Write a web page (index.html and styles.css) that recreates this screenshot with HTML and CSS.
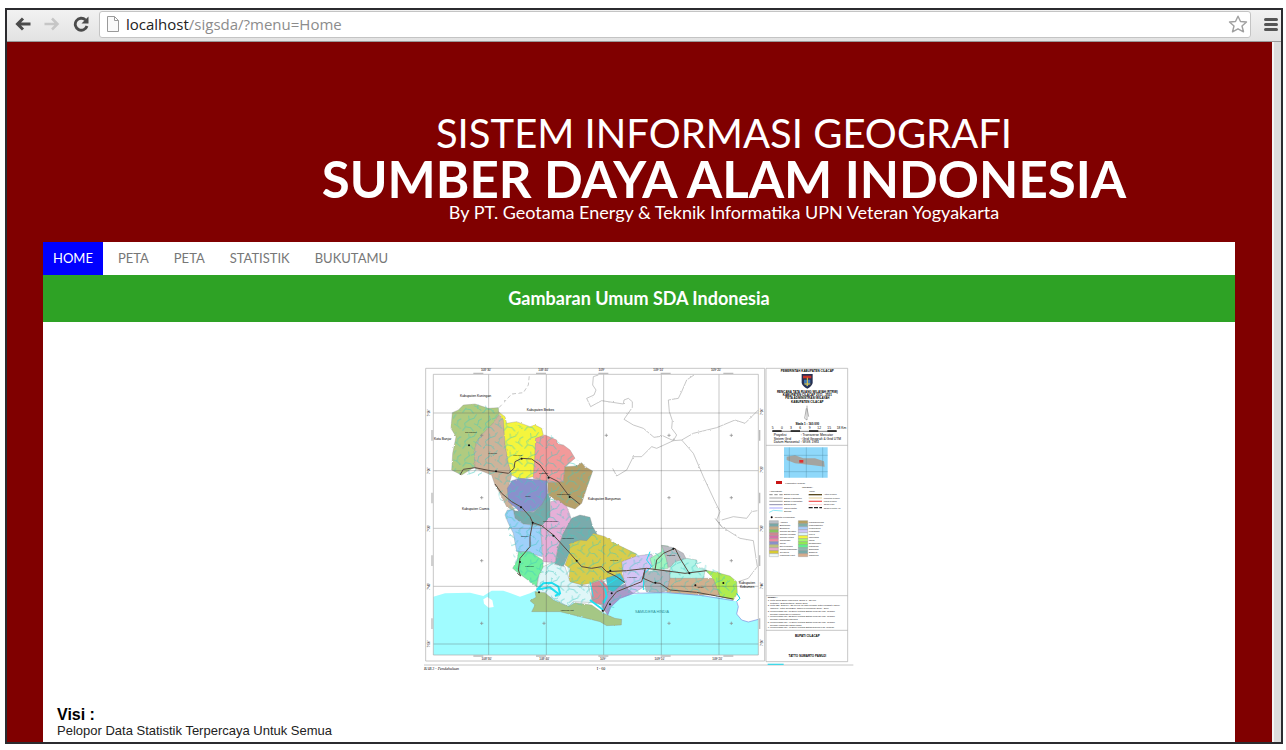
FILE: index.html
```html
<!DOCTYPE html>
<html lang="id">
<head>
    <meta charset="UTF-8">
    <meta name="viewport" content="width=device-width, initial-scale=1.0">
    <title>Sistem Informasi Geografi</title>
    <link rel="stylesheet" href="styles.css">
</head>
<body>
    <div class="browser">
        <div class="toolbar">
            <button class="tool" type="button" aria-label="Back">
                <svg width="16" height="14" viewBox="0 0 16 14"><path d="M8 1.500 2.500 7 8 12.500M3 7h12.500" fill="none" stroke="#4b4b4b" stroke-width="3"/></svg>
            </button>
            <button class="tool" type="button" aria-label="Forward">
                <svg width="16" height="14" viewBox="0 0 16 14"><path d="M8 1.500 13.500 7 8 12.500M13 7H.5" fill="none" stroke="#c6c6c6" stroke-width="2.500"/></svg>
            </button>
            <button class="tool" type="button" aria-label="Reload">
                <svg width="16" height="16" viewBox="0 0 16 16"><path d="M12.500 4A6 6 0 1 0 14 10" fill="none" stroke="#4b4b4b" stroke-width="2.800"/><path d="M15.500.5v7h-7z" fill="#4b4b4b"/></svg>
            </button>
            <div class="address">
                <svg width="12" height="16" viewBox="0 0 12 16"><path d="M.5.5h7l4 4v11H.5zM7.500.5v4h4" fill="#fafafa" stroke="#9a9a9a"/></svg>
                <label class="host" for="url">localhost</label>
                <input class="url" id="url" type="text" value="/sigsda/?menu=Home">
                <button class="star" type="button" aria-label="Bookmark">
                    <svg width="20" height="18" viewBox="0 0 20 18"><path d="M10 1.200 12.500 6.500 18.500 7 14 11l1.500 5.800L10 13.800 4.500 16.800 6 11 1.500 7l6-.5z" fill="#fff" stroke="#a0a0a0" stroke-width="1.400" stroke-linejoin="round"/></svg>
                </button>
            </div>
            <button class="tool" type="button" aria-label="Menu">
                <svg width="14" height="13" viewBox="0 0 14 13"><path d="M1.500 1.500h11M1.500 6.500h11M1.500 11.500h11" stroke="#555" stroke-width="3" stroke-linecap="round"/></svg>
            </button>
        </div>

        <div class="viewport">
            <div class="page">
                <header class="banner">
                    <h1>SISTEM INFORMASI GEOGRAFI <strong>SUMBER DAYA ALAM INDONESIA</strong></h1>
                    <p>By PT. Geotama Energy &amp; Teknik Informatika UPN Veteran Yogyakarta</p>
                </header>

                <div class="container">
                    <nav class="menu">
                        <a class="active" href="#">HOME</a>
                        <a href="#">PETA</a>
                        <a href="#">PETA</a>
                        <a href="#">STATISTIK</a>
                        <a href="#">BUKUTAMU</a>
                    </nav>
                    <h2 class="heading">Gambaran Umum SDA Indonesia</h2>

                    <main class="content">
                        <svg class="map" viewBox="0 0 1314 945" role="img" aria-label="Peta Kabupaten Cilacap">
                            <defs>
                                <pattern id="rivers" width="62" height="54" patternUnits="userSpaceOnUse">
                                    <path d="M4 50 13 38 10 28 24 17 22 5M24 17l14-4 8-12M13 38l15 3 9 11M60 44 49 34l3-14 10-6M49 34l-11-5"/>
                                </pattern>
                                <filter id="rough" x="-5%" y="-5%" width="110%" height="110%">
                                    <feTurbulence type="fractalNoise" baseFrequency="0.12" numOctaves="2" seed="4"/>
                                    <feDisplacementMap in="SourceGraphic" scale="6" xChannelSelector="R" yChannelSelector="G"/>
                                </filter>
                            </defs>

                            <!-- laut -->
                            <path class="sea" d="M40 710 75 700 150 698 190 708 215 692 250 692 300 710 330 700 350 690 560 760 570 745 590 722 620 706 700 697 800 700 900 713 948 724 955 740 950 762 965 780 985 786 1015 778V885H40z"/>
                            <path d="M190 718l12-7 15 10 4 20-15 2-14-12z" fill="#fff"/>

                            <!-- kecamatan -->
                            <g filter="url(#rough)">
                                <g class="regions">
                                    <path fill="#b0cb80" d="M97 158 115 150 130 135 165 132 205 145 235 143 237 165 215 195 185 225 170 245 163 275 165 320 125 345 95 330 98 280 108 230 93 205z"/>
                                    <path fill="#cdb39a" d="M237 165 250 175 255 250 265 310 275 345 265 380 270 420 285 455 260 440 240 400 225 375 215 345 165 325 163 275 170 245 185 225 215 195z"/>
                                    <path fill="#f5f53c" d="M235 155 255 170 260 190 290 185 330 200 345 195 365 205 370 225 347 240 345 290 340 350 300 358 275 345 265 310 255 250 250 180z"/>
                                    <path fill="#f29a9a" d="M347 235 375 225 410 240 412 252 430 255 450 270 465 295 435 320 430 365 385 368 340 355 345 290z"/>
                                    <path fill="#b5a06a" d="M435 320 470 318 485 308 495 320 518 333 500 385 485 430 465 447 430 435 385 405 383 368 430 365z"/>
                                    <path fill="#8a90cc" d="M275 362 300 355 340 358 380 362 383 395 375 430 340 455 300 455 265 425 262 385z"/>
                                    <path fill="#78a9a8" d="M280 452 340 457 365 435 383 400 390 415 390 475 365 498 310 492 285 475z"/>
                                    <path fill="#9fd0fa" d="M262 450 280 450 285 475 310 492 362 498 367 590 330 580 290 575 280 520 265 490 255 465z"/>
                                    <path fill="#e6b0d8" d="M392 425 415 420 440 440 450 465 455 490 430 520 415 560 405 608 370 605 362 500 390 470z"/>
                                    <path fill="#7aabac" d="M455 475 480 465 510 472 518 500 530 520 525 540 480 548 447 580 430 620 405 612 415 560 430 520z"/>
                                    <path fill="#d8cc4c" d="M447 580 450 550 480 540 500 542 520 520 555 530 590 553 650 582 645 592 620 600 605 640 615 665 575 655 540 660 515 670 480 675 445 665 450 625 435 615z"/>
                                    <path fill="#6ff0a0" d="M295 575 330 575 368 600 370 625 355 650 350 680 310 650 290 635 278 625 292 600z"/>
                                    <path fill="#dff6f8" d="M370 620 390 610 435 620 450 665 505 680 520 728 460 725 445 740 400 715 360 700 350 685 357 645z"/>
                                    <path fill="#a5c785" d="M345 695 375 698 400 720 445 740 465 728 515 735 550 760 585 775 605 778 604 795 560 797 540 785 480 770 420 755 335 755 345 735 330 722 348 712z"/>
                                    <path fill="#d88a94" d="M515 670 545 660 565 680 570 720 545 735 515 725z"/>
                                    <path fill="#a99ac8" d="M565 695 620 670 650 680 640 700 600 715 572 740 563 765 545 740z"/>
                                    <path fill="#3fc0d0" d="M558 655 600 640 615 665 580 695 565 690z"/>
                                    <path fill="#d4c4f4" d="M605 605 650 588 695 582 700 610 680 640 672 680 640 700 620 685 610 650z"/>
                                    <path fill="#9ff5c0" d="M690 595 725 575 725 556 745 558 740 600 745 625 700 632z"/>
                                    <path fill="#bcbcc4" d="M725 556 760 563 790 580 800 600 785 615 745 622 740 600z"/>
                                    <path fill="#b0b8c0" d="M675 635 750 630 750 690 720 698 680 696 670 660z"/>
                                    <path fill="#b0f5e8" d="M750 622 765 605 800 595 830 600 830 620 855 630 850 660 750 655z"/>
                                    <path fill="#d0b08e" d="M750 655 880 655 900 705 840 705 740 697z"/>
                                    <path fill="#b0ec50" d="M855 630 900 640 930 648 950 665 952 700 940 720 900 710 880 655z"/>
                                </g>
                                <path fill="url(#rivers)" d="M97 158 165 132 235 143 260 190 365 205 410 240 465 295 518 333 485 430 430 435 455 475 510 472 525 520 650 582 695 582 760 563 830 600 950 665 940 720 740 697 620 700 563 765 515 730 445 740 350 685 290 635 255 465 215 345 125 345 95 330 108 230z"/>
                            </g>
                            <path class="water" d="M350 690 370 670 395 668 415 680 420 700 405 708M355 688 390 682 420 705M510 720 530 735 550 750M555 685 560 710 550 730"/>
                            <path class="water thin" d="M690 575 680 600 695 620 672 640 670 690M560 675 600 650M510 665 520 710M540 665 555 685"/>
                            <path d="M563 765 572 742 600 715 640 700 740 698 840 706 940 722M950 724 955 740 950 762 965 780 985 786 1015 778" fill="none" stroke="#7b8be0" stroke-width="2"/>

                            <!-- batas dan jalan -->
                            <g class="border" filter="url(#rough)">
                                <path stroke-dasharray="12 7" d="M237 143 275 102 310 98 325 75 328 45"/>
                                <path d="M535 45 520 50 518 75 528 90 522 105 500 115 512 140 530 130 545 122 610 132 612 120 625 115 637 125 637 142 612 178 640 195 670 205 702 232 730 228 760 242 785 240 820 220 890 203 945 180 975 190 1005 160 1015 150"/>
                                <path d="M822 45 800 60 785 95 775 115 745 120 748 155 757 182 755 205 770 225 760 242 710 265 695 260 665 290 640 290 620 330 590 348 578 325"/>
                                <path d="M785 240 820 280 850 350 885 425 900 455 890 480 905 500 960 535 1000 542 1012 620 985 655 955 665M905 500 885 475M905 480 940 470 980 475 995 455 1012 452"/>
                            </g>
                            <path d="M950 700 960 715 950 724" fill="none" stroke="#00d0e0" stroke-width="3"/>
                            <g class="road">
                                <path d="M120 345 130 328 165 323 210 332 265 340 282 325 285 305 305 295 335 297 360 315 385 350 415 365 445 405 480 433"/>
                                <path d="M225 372 245 400 275 425 305 442 330 470 338 488 365 497 400 525 450 580 485 620 515 625 545 620 560 635 620 632 680 625 795 640 860 632"/>
                                <path d="M338 488 330 530 330 560 300 595 295 630 302 648 292 640M705 630 710 600 730 580 765 565 780 595 808 640M675 628 665 665 640 675 590 695 565 725 550 755M675 628 670 655 700 668 720 670 750 690 830 697 940 717M560 635 590 650 615 668"/>
                            </g>
                            <path class="towns" d="M147 256h.1M228 334h.1M305 296h.1M386 353h.1M449 411h.1M303 442h.1M338 488h.1M400 527h.1M300 606h.1M357 697h.1M470 602h.1M571 632h.1M575 700h.1M570 733h.1M548 752h.1M760 566h.1M706 668h.1M808 640h.1M826 676h.1M910 669h.1"/>

                            <!-- grid koordinat -->
                            <path class="grid" d="M206 43V885M379 43V885M551 43V885M724 43V885M897 43V885M40 159H1015M40 332H1015M40 505H1015M40 679H1015M40 852H1015"/>
                            <path class="frame" d="M17 25H1034V903H17zM40 43H1015V885H40zM1038 25H1283V905H1038zM1038 256H1283M1038 707H1283M1038 811H1283"/>
                            <path class="frame" d="M12 915H1300"/>
                            <path class="cross" d="M180 413h10m-5-5v10M180 602h10m-5-5v10M180 790h10m-5-5v10M367 790h10m-5-5v10M554 226h10m-5-5v10M742 226h10m-5-5v10M929 226h10m-5-5v10M742 413h10m-5-5v10M929 413h10m-5-5v10M929 602h10m-5-5v10M742 790h10m-5-5v10M929 790h10m-5-5v10M180 226h10m-5-5v10"/>
                            <path class="ticks" d="M160 40h30M348 40h30M535 40h30M722 40h30M910 40h30M160 888h30M348 888h30M535 888h30M722 888h30M910 888h30M36 210v32M36 398v32M36 586v32M36 775v32M1019 210v32M1019 398v32M1019 586v32M1019 775v32"/>

                            <g class="coord">
                                <text x="198" y="34">108°30'</text><text x="370" y="34">108°40'</text><text x="545" y="34">109°</text><text x="715" y="34">109°10'</text><text x="888" y="34">109°20'</text>
                                <text x="200" y="900">108°30'</text><text x="373" y="900">108°40'</text><text x="549" y="900">109°</text><text x="719" y="900">109°10'</text><text x="892" y="900">109°20'</text>
                                <text transform="translate(31 159) rotate(-90)">7°10'</text><text transform="translate(31 332) rotate(-90)">7°20'</text><text transform="translate(31 505) rotate(-90)">7°30'</text><text transform="translate(31 679) rotate(-90)">7°40'</text><text transform="translate(31 852) rotate(-90)">7°50'</text>
                                <text transform="translate(1030 155) rotate(-90)">7°10'</text><text transform="translate(1030 328) rotate(-90)">7°20'</text><text transform="translate(1030 505) rotate(-90)">7°30'</text><text transform="translate(1030 677) rotate(-90)">7°40'</text><text transform="translate(1030 848) rotate(-90)">7°50'</text>
                            </g>
                            <g class="place">
                                <text x="120" y="111">Kabupaten Kuningan</text>
                                <text x="320" y="154">Kabupaten Brebes</text>
                                <text x="42" y="239">Kota Banjar</text>
                                <text x="126" y="451">Kabupaten Ciamis</text>
                                <text x="504" y="421">Kabupaten Banyumas</text>
                                <text x="957" y="672">Kabupaten</text>
                                <text x="960" y="683">Kebumen</text>
                            </g>
                            <text class="ocean" x="645" y="759">SAMUDERA HINDIA</text>
                            <g class="tiny">
                                <text x="136" y="220">Dayeuhluhur</text><text x="205" y="281">Wanareja</text><text x="280" y="289">Majenang</text><text x="357" y="343">Cimanggu</text><text x="411" y="404">Karangpucung</text><text x="316" y="411">Cipari</text><text x="303" y="531">Sidareja</text><text x="370" y="487">Gandrungmangu</text><text x="425" y="538">Kawunganten</text><text x="316" y="622">Patimuan</text><text x="422" y="753">Kampung Laut</text><text x="570" y="602">Jeruklegi</text><text x="622" y="654">Kesugihan</text><text x="740" y="589">Sampang</text><text x="830" y="685">Adipala</text>
                            </g>

                            <!-- panel keterangan -->
                            <g class="title">
                                <text x="1162" y="37">PEMERINTAH KABUPATEN CILACAP</text>
                                <text x="1162" y="98">RENCANA TATA RUANG WILAYAH (RTRW)</text>
                                <text x="1162" y="108">KABUPATEN CILACAP 2011 - 2031</text>
                                <text x="1162" y="118">PETA ADMINISTRASI WILAYAH</text>
                                <text x="1162" y="129">KABUPATEN CILACAP</text>
                                <text x="1162" y="196">Skala 1 : 160.000</text>
                                <text x="1162" y="831">BUPATI CILACAP</text>
                                <text x="1162" y="892">TATTO SUWARTO PAMUJI</text>
                            </g>
                            <path d="M1145 42h33v27q-2 10-16 17-15-7-17-17z" fill="#253052"/>
                            <path d="M1149 47h25v8h-25z" fill="#c8342c"/>
                            <path d="M1152 59h19v10l-10 11-9-11z" fill="#3c78b8"/>
                            <path d="M1162 53v25M1153 72h18" stroke="#e8c63c" stroke-width="3"/>
                            <path d="M1161 137v43l-7-5 5-30M1161 145l5 25" fill="none" stroke="#888" stroke-width="2"/>
                            <path d="M1057 214H1250" stroke="#333" stroke-width="2"/>
                            <path d="M1057 213H1250" stroke="#111" stroke-width="5" stroke-dasharray="28 27"/>
                            <g class="place">
                                <text x="1055" y="207">5</text><text x="1083" y="207">0</text><text x="1110" y="207">3</text><text x="1138" y="207">6</text><text x="1166" y="207">9</text><text x="1192" y="207">12</text><text x="1222" y="207">15</text><text x="1250" y="207">18 Km</text>
                                <text x="1061" y="229">Proyeksi</text><text x="1142" y="229">: Transverse Mercator</text>
                                <text x="1061" y="239">Sistem Grid</text><text x="1142" y="239">: Grid Geografi &amp; Grid UTM</text>
                                <text x="1061" y="249">Datum Horizontal</text><text x="1142" y="249">: WGS 1984</text>
                            </g>
                            <path fill="#8fd8fa" d="M1092 262h131v91h-131z"/>
                            <path fill="#a4a4a0" d="M1100 290 1125 286 1150 295 1185 295 1212 304 1214 320 1180 316 1125 310 1100 300z"/>
                            <path fill="#e03030" d="M1138 300h12v8h-12z"/>
                            <path d="M1108 262v91M1159 262v91M1208 262v91M1092 286h131M1092 335h131" stroke="#46839c" stroke-width="1" fill="none"/>
                            <path fill="#c81414" d="M1068 363h18v9h-18z"/>
                            <g class="legend">
                                <text x="1096" y="371">Kabupaten Cilacap</text>
                                <text x="1146" y="384">LEGENDA</text>
                                <text x="1048" y="397">Administrasi</text><text x="1168" y="397">Jalan</text>
                                <text x="1092" y="406">Batas Provinsi</text><text x="1092" y="416">Batas Kabupaten</text><text x="1092" y="426">Batas Kecamatan</text><text x="1092" y="436">Batas Desa</text><text x="1092" y="446">Garis Pantai</text><text x="1092" y="456">Sungai</text>
                                <text x="1211" y="406">Arteri Primer</text><text x="1211" y="416">Kolektor Primer</text><text x="1211" y="426">Lokal Primer</text><text x="1211" y="436">Jalan Lain</text><text x="1211" y="446">Jalan Kereta Api</text>
                                <text x="1064" y="475">Ibukota Kecamatan</text>
                                <text x="1079" y="489">Adipala</text><text x="1079" y="498">Bantarsari</text><text x="1079" y="507">Binangun</text><text x="1079" y="516">Cilacap Selatan</text><text x="1079" y="525">Cilacap Tengah</text><text x="1079" y="534">Cilacap Utara</text><text x="1079" y="543">Cimanggu</text><text x="1079" y="552">Cipari</text><text x="1079" y="561">Dayeuhluhur</text><text x="1079" y="570">Gandrungmangu</text><text x="1079" y="579">Jeruklegi</text><text x="1079" y="588">Kampung Laut</text>
                                <text x="1166" y="489">Karangpucung</text><text x="1166" y="498">Kawunganten</text><text x="1166" y="507">Kedungreja</text><text x="1166" y="516">Kesugihan</text><text x="1166" y="525">Kroya</text><text x="1166" y="534">Majenang</text><text x="1166" y="543">Maos</text><text x="1166" y="552">Nusawungu</text><text x="1166" y="561">Patimuan</text><text x="1166" y="570">Sampang</text><text x="1166" y="579">Sidareja</text><text x="1166" y="588">Wanareja</text>
                            </g>
                            <g fill="none" stroke-width="2">
                                <path stroke="#555" stroke-dasharray="10 5" d="M1048 404h40"/><path stroke="#777" d="M1048 414h40M1048 424h40"/><path stroke="#558" d="M1048 434h40"/><path stroke="#77f" d="M1048 444h40"/><path stroke="#5de" d="M1048 457 1060 451 1088 453"/>
                                <path stroke="#5a4a20" stroke-width="4" d="M1166 404h40"/><path stroke="#d8b860" d="M1166 414h40"/><path stroke="#f06060" stroke-width="4" d="M1166 424h40"/><path stroke="#fbb" d="M1166 434h40"/><path stroke="#222" stroke-width="4" stroke-dasharray="12 4" d="M1166 443h40"/>
                            </g>
                            <circle cx="1055" cy="472" r="3"/>
                            <g class="swatches">
                                <path fill="#b8bfc6" d="M1048 482h27v9h-27z"/><path fill="#78a9a8" d="M1048 491h27v9h-27z"/><path fill="#c6ac88" d="M1048 500h27v9h-27z"/><path fill="#88c460" d="M1048 509h27v9h-27z"/><path fill="#cf8791" d="M1048 518h27v9h-27z"/><path fill="#d472ac" d="M1048 527h27v9h-27z"/><path fill="#ee8ba0" d="M1048 536h27v9h-27z"/><path fill="#8a90cc" d="M1048 545h27v9h-27z"/><path fill="#c0c37c" d="M1048 554h27v9h-27z"/><path fill="#e6a8cc" d="M1048 563h27v9h-27z"/><path fill="#d8cc30" d="M1048 572h27v9h-27z"/><path fill="#eef8f8" d="M1048 581h27v9h-27z"/>
                                <path fill="#b5a060" d="M1135 482h28v9h-28z"/><path fill="#80b0a8" d="M1135 491h28v9h-28z"/><path fill="#a8ccfa" d="M1135 500h28v9h-28z"/><path fill="#d0c8fa" d="M1135 509h28v9h-28z"/><path fill="#dff6fa" d="M1135 518h28v9h-28z"/><path fill="#f5f53c" d="M1135 527h28v9h-28z"/><path fill="#a8f870" d="M1135 536h28v9h-28z"/><path fill="#90ec50" d="M1135 545h28v9h-28z"/><path fill="#60f090" d="M1135 554h28v9h-28z"/><path fill="#90b8b0" d="M1135 563h28v9h-28z"/><path fill="#78aaa8" d="M1135 572h28v9h-28z"/><path fill="#d8ac8c" d="M1135 581h28v9h-28z"/>
                            </g>
                            <g class="legend">
                                <text x="1043" y="714" font-weight="bold">Sumber :</text>
                                <text x="1043" y="722">1. Peta Rupa Bumi Indonesia, Skala 1 : 25.000</text>
                                <text x="1050" y="731">Cetakan : Bakosurtanal, Tahun 2001</text>
                                <text x="1043" y="739">2. Peta RBI, Skala 1 : 25.000 di-up date dengan Citra Landsat 7 ETM+</text>
                                <text x="1050" y="747">(band 5), Citra QuickBird, Tahun Perekaman 2008 - 2009</text>
                                <text x="1043" y="756">3. Permendagri No. 16/2007 tentang Batas Wilayah Kab. Cilacap</text>
                                <text x="1050" y="764">dengan Kabupaten Kebumen</text>
                                <text x="1043" y="772">4. Permendagri No. 35/2006 tentang Batas Wilayah Kab. Cilacap</text>
                                <text x="1050" y="780">dengan Kabupaten Brebes</text>
                                <text x="1043" y="789">5. Permendagri No. 44/2007 tentang Batas Wilayah Kab. Cilacap</text>
                                <text x="1050" y="797">dengan Kabupaten Banyumas</text>
                                <text x="1043" y="805">6. Permendagri No. 40/2006 tentang Batas Daerah Kab. Cilacap</text>
                            </g>
                            <path d="M1043 913h48" stroke="#40d8e8" stroke-width="4"/>
                            <text class="footnote" x="12" y="931">BAB 3 - Pendahuluan</text>
                            <text class="footnote page-no" x="530" y="929">I - 60</text>
                        </svg>

                        <section class="vision">
                            <h3>Visi :</h3>
                            <p>Pelopor Data Statistik Terpercaya Untuk Semua</p>
                        </section>
                    </main>
                </div>
            </div>
            <div class="scrollbar"></div>
        </div>
    </div>
</body>
</html>
```
FILE: styles.css
```css
* {
    box-sizing: border-box;
}

body {
    margin: 0;
    padding: 8px 3px 6px 5px;
    min-height: 100vh;
    display: flex;
    background-color: #fff;
    font-family: "Liberation Sans", Arial, sans-serif;
}

h1, h2, h3, p {
    margin: 0;
}

.browser {
    flex: 1;
    display: flex;
    flex-direction: column;
    border: 2px solid #2b2b2f;
}

/* browser toolbar */
.toolbar {
    display: flex;
    align-items: center;
    gap: 13px;
    height: 32px;
    padding: 0 3px 3px 8px;
    background: linear-gradient(#f2f2f2, #e2e2e2);
    border-bottom: 1px solid #999;
}

.tool, .star {
    display: flex;
    padding: 0;
    border: none;
    background: none;
}

.address {
    flex: 1;
    display: flex;
    align-items: center;
    height: 27px;
    margin-left: -3px;
    padding: 0 2px 0 7px;
    background-color: #fff;
    border: 1px solid #c4c4c4;
    border-radius: 3px;
    font: 15px "Open Sans", sans-serif;
}

.host {
    margin-left: 7px;
    color: #222;
}

.url {
    flex: 1;
    padding: 0;
    border: none;
    outline: none;
    font: inherit;
    color: #8c8c8c;
}

/* page */
.viewport {
    flex: 1;
    display: flex;
}

.page {
    flex: 1;
    display: flex;
    flex-direction: column;
    padding: 0 37px 0 36px;
    background-color: #800000;
}

.scrollbar {
    width: 9px;
    background-color: #dcdcdc;
    border-left: 2px solid #f4f4f4;
}

.banner {
    padding: 68px 0 20px 170px;
    color: #fff;
    text-align: center;
    font-family: Lato, sans-serif;
}

.banner h1 {
    font-size: 40px;
    font-weight: 400;
    line-height: 46px;
}

.banner strong {
    display: block;
    font-size: 51px;
    font-weight: 700;
}

.banner p {
    font-size: 18px;
    line-height: 20px;
}

.container {
    flex: 1;
    background-color: #fff;
}

.menu {
    display: flex;
    gap: 5px;
    font: 13px/33px Lato, sans-serif;
}

.menu a {
    padding: 0 10px;
    color: #777;
    text-decoration: none;
}

.menu .active {
    background-color: #0000ff;
    color: #fff;
}

.heading {
    background-color: #2ea225;
    color: #fff;
    text-align: center;
    font: bold 18px/47px Lato, sans-serif;
}

.content {
    padding: 38px 14px 4px;
}

.map {
    display: block;
    width: 438px;
    margin: 0 auto;
}

.vision {
    margin-top: 31px;
    color: #222;
}

.vision h3 {
    font-size: 16px;
    line-height: 18px;
    color: #000;
}

.vision p {
    font-size: 13px;
    line-height: 13px;
}

/* map drawing */
.sea {
    fill: #a0fcff;
}

.regions path {
    stroke: #8a8a8a;
    stroke-width: 1;
}

#rivers path {
    fill: none;
    stroke: #40c8c0;
    stroke-width: 3;
    opacity: 0.5;
}

.water {
    fill: none;
    stroke: #20e0f0;
    stroke-width: 6;
}

.water.thin {
    stroke-width: 3;
}

.border, .road {
    fill: none;
    stroke: #aaa;
    stroke-width: 2;
}

.road {
    stroke: #5a4a40;
    stroke-width: 3;
}

.towns {
    stroke: #111;
    stroke-width: 6;
    stroke-linecap: round;
}

.grid {
    stroke: #555;
    stroke-width: 1;
}

.frame {
    fill: none;
    stroke: #aaa;
    stroke-width: 2;
}

.cross {
    stroke: #888;
    stroke-width: 2;
}

.ticks {
    stroke: #bbb;
    stroke-width: 4;
}

.map text {
    font-family: "Liberation Sans", Arial, sans-serif;
    font-size: 10px;
}

.map .coord text {
    font-size: 9px;
    text-anchor: middle;
}

.map .title text {
    font-size: 9px;
    font-weight: bold;
    text-anchor: middle;
}

.map .tiny text {
    font-size: 6px;
}

.map .legend text {
    font-size: 7px;
    fill: #222;
}

.map .ocean {
    font-size: 11px;
    fill: #2a8c94;
}

.map .footnote {
    font: italic 12px "Liberation Serif", serif;
}

.map .page-no {
    font-style: normal;
}

.swatches path {
    stroke: #888;
    stroke-width: 1;
}
```
